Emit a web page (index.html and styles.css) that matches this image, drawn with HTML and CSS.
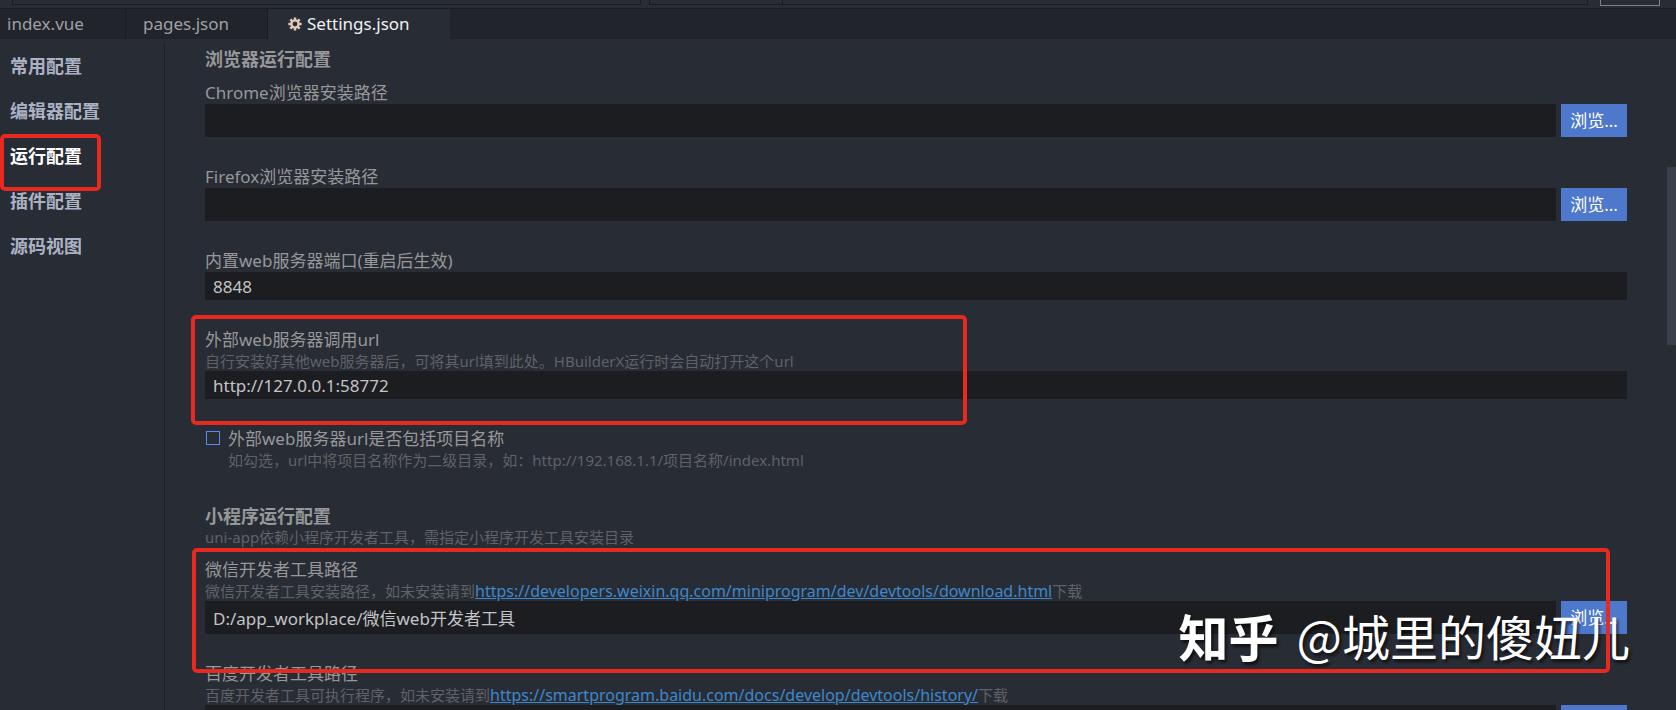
FILE: index.html
```
<!DOCTYPE html>
<html lang="zh-Hans">
  <head>
    <meta charset="UTF-8" />
    <title>Settings.json</title>
    <link rel="stylesheet" href="styles.css" />
  </head>
  <body>
    <!-- 工具栏 -->
    <div class="toolbar">
      <div class="tool-box path"></div>
      <div class="tool-box search"><span class="search-type"></span></div>
      <div class="tool-btn"></div>
    </div>

    <!-- 标签页 -->
    <nav class="tabs">
      <button class="tab tab-index">index.vue</button>
      <button class="tab tab-pages">pages.json</button>
      <button class="tab tab-settings active">
        <svg class="gear" viewBox="0 0 14 14" width="14" height="14">
          <circle cx="7" cy="7" r="3.6" fill="none" stroke="#e3cdb9" stroke-width="2.4" />
          <path
            d="M7 0.4v2.4M7 11.2v2.4M0.4 7h2.4M11.2 7h2.4M2.3 2.3l1.7 1.7M10 10l1.7 1.7M11.7 2.3L10 4M4 10l-1.7 1.7"
            stroke="#e3cdb9"
            stroke-width="2.4"
          />
        </svg>
        Settings.json
      </button>
    </nav>

    <div class="content">
      <ul class="sidebar">
        <li><a href="#common">常用配置</a></li>
        <li><a href="#editor">编辑器配置</a></li>
        <li class="current"><a href="#run">运行配置</a><span class="mark mark-menu"></span></li>
        <li><a href="#plugin">插件配置</a></li>
        <li><a href="#source">源码视图</a></li>
      </ul>

      <main class="settings" id="run">
        <section>
          <h3>浏览器运行配置</h3>
          <div class="field">
            <label for="chrome">Chrome浏览器安装路径</label>
            <div class="row">
              <input id="chrome" type="text" />
              <button class="btn">浏览...</button>
            </div>
          </div>
          <div class="field">
            <label for="firefox">Firefox浏览器安装路径</label>
            <div class="row">
              <input id="firefox" type="text" />
              <button class="btn">浏览...</button>
            </div>
          </div>
          <div class="field">
            <label for="port">内置web服务器端口(重启后生效)</label>
            <input id="port" type="text" value="8848" />
          </div>
          <div class="field">
            <label for="url">外部web服务器调用url</label>
            <p class="hint">自行安装好其他web服务器后，可将其url填到此处。HBuilderX运行时会自动打开这个url</p>
            <input id="url" type="text" value="http://127.0.0.1:58772" />
            <span class="mark mark-url"></span>
          </div>
          <div class="field check">
            <input id="include" type="checkbox" />
            <div>
              <label for="include">外部web服务器url是否包括项目名称</label>
              <p class="hint">如勾选，url中将项目名称作为二级目录，如：http://192.168.1.1/项目名称/index.html</p>
            </div>
          </div>
        </section>

        <section>
          <h3>小程序运行配置</h3>
          <p class="hint">uni-app依赖小程序开发者工具，需指定小程序开发工具安装目录</p>
          <div class="field">
            <label for="weixin">微信开发者工具路径</label>
            <p class="hint">微信开发者工具安装路径，如未安装请到<a href="https://developers.weixin.qq.com/miniprogram/dev/devtools/download.html">https://developers.weixin.qq.com/miniprogram/dev/devtools/download.html</a>下载</p>
            <div class="row">
              <input id="weixin" type="text" value="D:/app_workplace/微信web开发者工具" />
              <button class="btn">浏览...</button>
            </div>
            <span class="mark mark-weixin"></span>
          </div>
          <div class="field">
            <label for="baidu">百度开发者工具路径</label>
            <p class="hint">百度开发者工具可执行程序，如未安装请到<a href="https://smartprogram.baidu.com/docs/develop/devtools/history/">https://smartprogram.baidu.com/docs/develop/devtools/history/</a>下载</p>
            <div class="row">
              <input id="baidu" type="text" />
              <button class="btn">浏览...</button>
            </div>
          </div>
        </section>
      </main>

      <div class="scroll-thumb"></div>
    </div>

    <div class="watermark"><b>知乎</b><span>@城里的傻妞儿</span></div>
  </body>
</html>
```

FILE: styles.css
```
* {
  box-sizing: border-box;
}
body {
  margin: 0;
  height: 100vh;
  display: flex;
  flex-direction: column;
  overflow: hidden;
  position: relative;
  background-color: #282c34;
  color: #97989a;
  font-family: "Noto Sans", "Noto Sans CJK SC", sans-serif;
  font-size: 17px;
  line-height: 22px;
}
button,
input {
  font: inherit;
  border: none;
  border-radius: 0;
  margin: 0;
}
h3,
p,
ul {
  margin: 0;
  padding: 0;
}

/* 工具栏 */
.toolbar {
  display: flex;
  flex: none;
  height: 9px;
  padding: 0 16px 0 12px;
  border-bottom: 1px solid #191c22;
}
.tool-box {
  height: 5px;
  border: 1px solid #191c22;
  border-top: none;
}
.path {
  flex: 629;
  margin-right: 8px;
}
.search {
  flex: 939;
  margin-right: 12px;
}
.search-type {
  display: block;
  width: 133px;
  height: 4px;
  border-right: 1px solid #191c22;
}
.tool-btn {
  width: 60px;
  height: 6px;
  border: 1px solid #7c808a;
  border-top: none;
}

/* 标签页 */
.tabs {
  display: flex;
  flex: none;
  height: 30px;
  background-color: #21252b;
}
.tab {
  display: flex;
  align-items: center;
  padding: 0;
  background: none;
  color: #9da0a6;
  border-right: 1px solid #191c22;
  cursor: pointer;
}
.tab-index {
  width: 126px;
  padding-left: 7px;
}
.tab-pages {
  width: 142px;
  padding-left: 17px;
}
.tab-settings {
  width: 182px;
  padding-left: 20px;
  gap: 5px;
}
.tab.active {
  background-color: #282c34;
  color: #f0f1f3;
  border-right: none;
}

.content {
  display: flex;
  flex: 1;
  min-height: 0;
  position: relative;
}

/* 左侧菜单 */
.sidebar {
  flex: none;
  width: 165px;
  margin-top: 4px;
  padding: 1px 0 0 10px;
  list-style: none;
  border-right: 1px solid #1c1f26;
  font-size: 18px;
  font-weight: bold;
}
.sidebar li {
  position: relative;
  height: 45px;
  line-height: 45px;
}
.sidebar a {
  color: #abb2c4;
  text-decoration: none;
}
.sidebar .current a {
  color: #ffffff;
}

/* 设置项 */
.settings {
  flex: 1;
  min-width: 0;
  padding: 9px 49px 0 40px;
}
section {
  margin-bottom: 35px;
}
h3 {
  margin-bottom: 12px;
  font-size: 18px;
  line-height: 22px;
}
h3:has(+ .hint) {
  margin-bottom: 0;
}
section > .hint {
  margin-bottom: 12px;
}
.field {
  position: relative;
  margin-bottom: 29px;
}
.field:last-child {
  margin-bottom: 0;
}
.field label {
  display: block;
}
.hint {
  color: #5f6268;
  font-size: 15px;
  line-height: 20px;
}
.hint a {
  color: #3c88cc;
  font-size: 16px;
}
input[type="text"] {
  display: block;
  width: 100%;
  height: 28px;
  padding: 0 8px;
  background-color: #1c1d21;
  color: #c3c4c6;
  outline: none;
}
.row {
  display: flex;
  gap: 5px;
}
.row input[type="text"] {
  flex: 1;
  height: 33px;
}
.btn {
  width: 66px;
  height: 33px;
  padding: 0;
  background-color: #4d78cc;
  color: #ffffff;
  cursor: pointer;
}
.check {
  display: flex;
  gap: 8px;
}
.check input {
  appearance: none;
  flex: none;
  width: 14px;
  height: 14px;
  margin: 3px 0 0 1px;
  border: 1px solid #568af2;
}

.scroll-thumb {
  position: absolute;
  top: 128px;
  right: 0;
  width: 9px;
  height: 178px;
  background-color: #3a3f4b;
}

/* 红色标注框 */
.mark {
  position: absolute;
  z-index: 2;
  border: 4px solid #e8291f;
  border-radius: 5px;
  pointer-events: none;
}
.mark-menu {
  top: 0;
  left: -10px;
  width: 101px;
  height: 57px;
}
.mark-url {
  top: -14px;
  bottom: -26px;
  left: -14px;
  width: 776px;
}
.mark-weixin {
  top: -11px;
  bottom: -39px;
  left: -13px;
  right: 17px;
}

/* 水印 */
.watermark {
  position: absolute;
  right: 46px;
  bottom: 40px;
  z-index: 1;
  display: flex;
  align-items: center;
  gap: 18px;
  color: #ffffff;
  font-family: "Noto Sans CJK SC", sans-serif;
  font-size: 48px;
  line-height: 70px;
  text-shadow: 2px 3px 3px rgba(0, 0, 0, 0.6);
  pointer-events: none;
}
.watermark b {
  font-size: 50px;
}
```
